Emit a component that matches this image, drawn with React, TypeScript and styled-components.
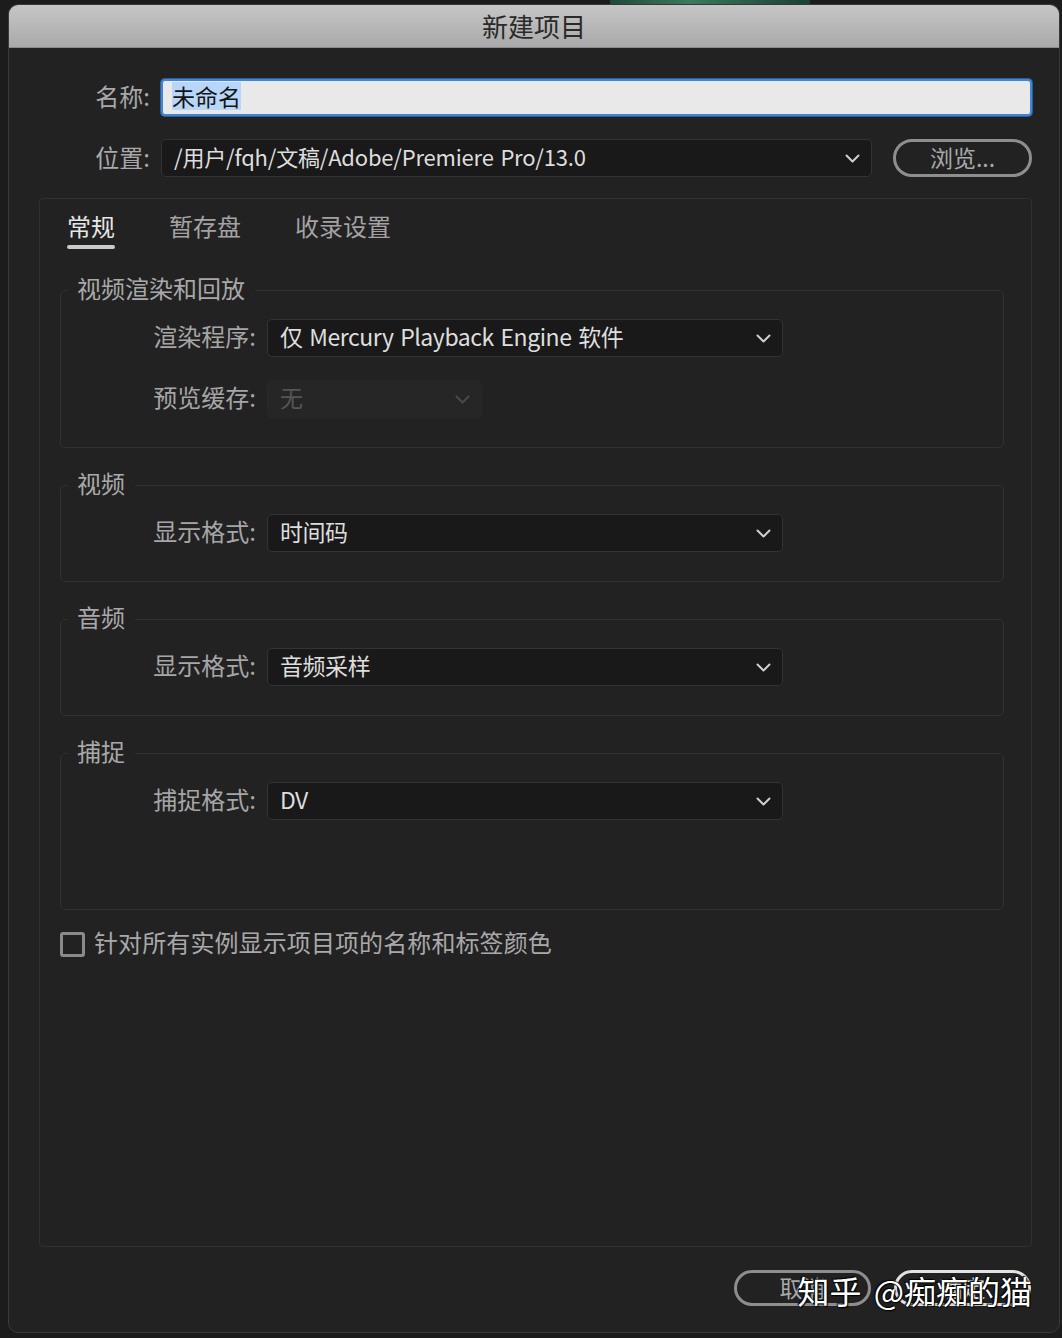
import * as React from 'react'
import styled, { createGlobalStyle } from 'styled-components'

const GlobalStyle = createGlobalStyle`
  html, body {
    margin: 0;
    background: #1c1c1c;
    font-family: "Noto Sans CJK SC", "Noto Sans", sans-serif;
  }
`

const Chevron: React.FC<{ color?: string }> = ({ color = '#cfcfcf' }) => (
  <svg width="15" height="9" viewBox="0 0 15 9">
    <path d="M1.5 1.5l6 6 6-6" fill="none" stroke={color} strokeWidth="2" strokeLinecap="round" strokeLinejoin="round" />
  </svg>
)

const Select: React.FC<{ value: string; width: number; disabled?: boolean; small?: boolean }> = ({
  value,
  width,
  disabled,
  small,
}) => (
  <SelectBox $disabled={disabled} style={{ width }}>
    <SelectText $small={small}>{value}</SelectText>
    <Chevron color={disabled ? '#4a4a4a' : '#cfcfcf'} />
  </SelectBox>
)

type Row = { label: string; value: string; width?: number; disabled?: boolean }
type Group = { title: string; rows: Row[]; tall?: boolean }

const groups: Group[] = [
  {
    title: '视频渲染和回放',
    rows: [
      { label: '渲染程序:', value: '仅 Mercury Playback Engine 软件' },
      { label: '预览缓存:', value: '无', width: 215, disabled: true },
    ],
  },
  { title: '视频', rows: [{ label: '显示格式:', value: '时间码' }] },
  { title: '音频', rows: [{ label: '显示格式:', value: '音频采样' }] },
  { title: '捕捉', rows: [{ label: '捕捉格式:', value: 'DV' }], tall: true },
]

const tabs = ['常规', '暂存盘', '收录设置']

const App: React.FC = () => {
  const [active, setActive] = React.useState(0)
  const [checked, setChecked] = React.useState(false)

  return (
    <>
      <GlobalStyle />
      <Desktop>
        <Thumb />
        <Window>
          <TitleBar>新建项目</TitleBar>
          <Body>
            <Form>
              <Label>名称:</Label>
              <NameInput>
                <Selected>未命名</Selected>
              </NameInput>
              <Label>位置:</Label>
              <Select value="/用户/fqh/文稿/Adobe/Premiere Pro/13.0" width={711} small />
              <PillButton>浏览...</PillButton>
            </Form>

            <Panel>
              <TabBar>
                {tabs.map((t, i) => (
                  <Tab key={t} $active={i === active} onClick={() => setActive(i)}>
                    {t}
                  </Tab>
                ))}
              </TabBar>

              {groups.map((g) => (
                <Fieldset key={g.title} $tall={g.tall}>
                  <Legend>
                    <LegendText>{g.title}</LegendText>
                  </Legend>
                  <FieldGrid>
                    {g.rows.map((r) => (
                      <React.Fragment key={r.label}>
                        <FieldLabel>{r.label}</FieldLabel>
                        <Select value={r.value} width={r.width ?? 516} disabled={r.disabled} />
                      </React.Fragment>
                    ))}
                  </FieldGrid>
                </Fieldset>
              ))}

              <CheckRow onClick={() => setChecked(!checked)}>
                <CheckBox $on={checked} />
                <CheckLabel>针对所有实例显示项目项的名称和标签颜色</CheckLabel>
              </CheckRow>
            </Panel>

            <Footer>
              <PillButton $wide>取消</PillButton>
              <PillButton $wide $primary>确定</PillButton>
            </Footer>
          </Body>
          <Watermark>知乎 @痴痴的猫</Watermark>
        </Window>
      </Desktop>
    </>
  )
}

const Desktop = styled.div`
  position: relative;
  width: 1062px;
  height: 1338px;
  overflow: hidden;
  padding: 4px 0 0 8px;
  box-sizing: border-box;
`

const Thumb = styled.div`
  position: absolute;
  top: 0;
  left: 610px;
  width: 200px;
  height: 6px;
  background: linear-gradient(90deg, #1f4a3a, #3b7a5c 40%, #2a5c48 70%, #1d4033);
`

const Window = styled.div`
  position: relative;
  width: 1052px;
  height: 1329px;
  display: flex;
  flex-direction: column;
  background: #222222;
  border: 1px solid #3a3a3a;
  border-radius: 10px;
  overflow: hidden;
  box-sizing: border-box;
`

const TitleBar = styled.div`
  height: 43px;
  flex: none;
  display: flex;
  align-items: center;
  justify-content: center;
  padding-bottom: 2px;
  box-sizing: border-box;
  background: linear-gradient(#c6c6c6, #a9a9a9);
  border-bottom: 1px solid #8b8b8b;
  color: #2a2a2a;
  font-size: 26px;
`

const Body = styled.div`
  flex: 1;
  display: flex;
  flex-direction: column;
  padding: 31px 27px 26px 0;
`

const Form = styled.div`
  display: grid;
  grid-template-columns: 141px 711px 1fr;
  column-gap: 11px;
  row-gap: 23px;
  align-items: center;
  & > :nth-child(2) {
    grid-column: 2 / 4;
  }
  & > :last-child {
    margin-left: 10px;
  }
`

const Label = styled.div`
  text-align: right;
  color: #a9a9a9;
  font-size: 24px;
  line-height: 29px;
  padding-bottom: 4px;
`

const NameInput = styled.div`
  height: 37px;
  display: flex;
  align-items: center;
  padding: 0 0 3px 9px;
  box-sizing: border-box;
  background: #e9e9e9;
  border: 2px solid #3d86d8;
  border-radius: 4px;
  box-shadow: 0 0 0 1px #2d5e96;
`

const Selected = styled.span`
  background: #b8d6f7;
  color: #151515;
  font-size: 23px;
  line-height: 28px;
`

const SelectBox = styled.div<{ $disabled?: boolean }>`
  height: 38px;
  display: flex;
  align-items: center;
  justify-content: space-between;
  padding: 0 11px 0 12px;
  box-sizing: border-box;
  background: ${(p) => (p.$disabled ? '#262626' : '#191919')};
  border: 1px solid ${(p) => (p.$disabled ? '#282828' : '#343434')};
  border-radius: 5px;
  color: ${(p) => (p.$disabled ? '#555555' : '#dedede')};
`

const SelectText = styled.span<{ $small?: boolean }>`
  font-size: ${(p) => (p.$small ? '22px' : '23px')};
  letter-spacing: ${(p) => (p.$small ? '-0.2px' : '-0.45px')};
  word-spacing: 2px;
  line-height: 28px;
  padding-bottom: 5px;
  white-space: nowrap;
`

const PillButton = styled.div<{ $wide?: boolean; $primary?: boolean }>`
  width: ${(p) => (p.$wide ? '137px' : '139px')};
  height: ${(p) => (p.$wide ? '36px' : '38px')};
  display: flex;
  align-items: center;
  justify-content: center;
  padding-bottom: 3px;
  box-sizing: border-box;
  border: 3px solid ${(p) => (p.$primary ? '#e2e2e2' : '#8e8e8e')};
  border-radius: 19px;
  color: ${(p) => (p.$primary ? '#f2f2f2' : '#a9a9a9')};
  font-size: 23px;
  cursor: pointer;
`

const Panel = styled.div`
  flex: 1;
  margin: 21px 0 0 30px;
  padding: 12px 27px 0 20px;
  border: 1px solid #303030;
  border-radius: 4px;
  display: flex;
  flex-direction: column;
  align-items: flex-start;
`

const TabBar = styled.div`
  display: flex;
  gap: 54px;
  margin-left: 7px;
  margin-bottom: 27px;
`

const Tab = styled.div<{ $active?: boolean }>`
  font-size: 24px;
  line-height: 29px;
  color: ${(p) => (p.$active ? '#e6e6e6' : '#a3a3a3')};
  cursor: pointer;
  &::after {
    content: '';
    display: block;
    height: 4px;
    margin-top: 5px;
    border-radius: 2px;
    background: ${(p) => (p.$active ? '#cacaca' : 'transparent')};
  }
`

const Fieldset = styled.fieldset<{ $tall?: boolean }>`
  align-self: stretch;
  margin: 0 0 23px;
  padding: 14px 0 ${(p) => (p.$tall ? '89px' : '29px')};
  border: 1px solid #313131;
  border-radius: 5px;
  min-width: 0;
`

const Legend = styled.legend`
  margin-left: 6px;
  padding: 0 10px;
  font-size: 24px;
  line-height: 29px;
  color: #a9a9a9;
`

const LegendText = styled.span`
  position: relative;
  top: -3px;
`

const FieldGrid = styled.div`
  display: grid;
  grid-template-columns: 195px auto;
  justify-content: start;
  column-gap: 11px;
  row-gap: 23px;
  align-items: center;
`

const FieldLabel = styled.div`
  text-align: right;
  font-size: 24px;
  line-height: 29px;
  padding-bottom: 5px;
  color: #a6a6a6;
`

const CheckRow = styled.label`
  display: flex;
  align-items: flex-start;
  gap: 9px;
  margin-top: -1px;
  cursor: pointer;
`

const CheckBox = styled.span<{ $on?: boolean }>`
  width: 25px;
  height: 25px;
  flex: none;
  box-sizing: border-box;
  border: 3px solid #8a8a8a;
  border-radius: 3px;
  background: ${(p) => (p.$on ? '#8a8a8a' : 'transparent')};
`

const CheckLabel = styled.span`
  font-size: 24px;
  line-height: 25px;
  margin-top: -3px;
  letter-spacing: 0.1px;
  color: #a9a9a9;
`

const Footer = styled.div`
  display: flex;
  justify-content: flex-end;
  gap: 23px;
  margin-top: 23px;
  padding-right: 1px;
`

const Watermark = styled.div`
  position: absolute;
  right: 27px;
  bottom: 22px;
  font-size: 32px;
  line-height: 40px;
  word-spacing: 5px;
  color: #ffffff;
  white-space: nowrap;
  text-shadow: 0 0 2px #000, 1px 1px 1px #000, -1px -1px 1px #000;
  pointer-events: none;
`

export default App
